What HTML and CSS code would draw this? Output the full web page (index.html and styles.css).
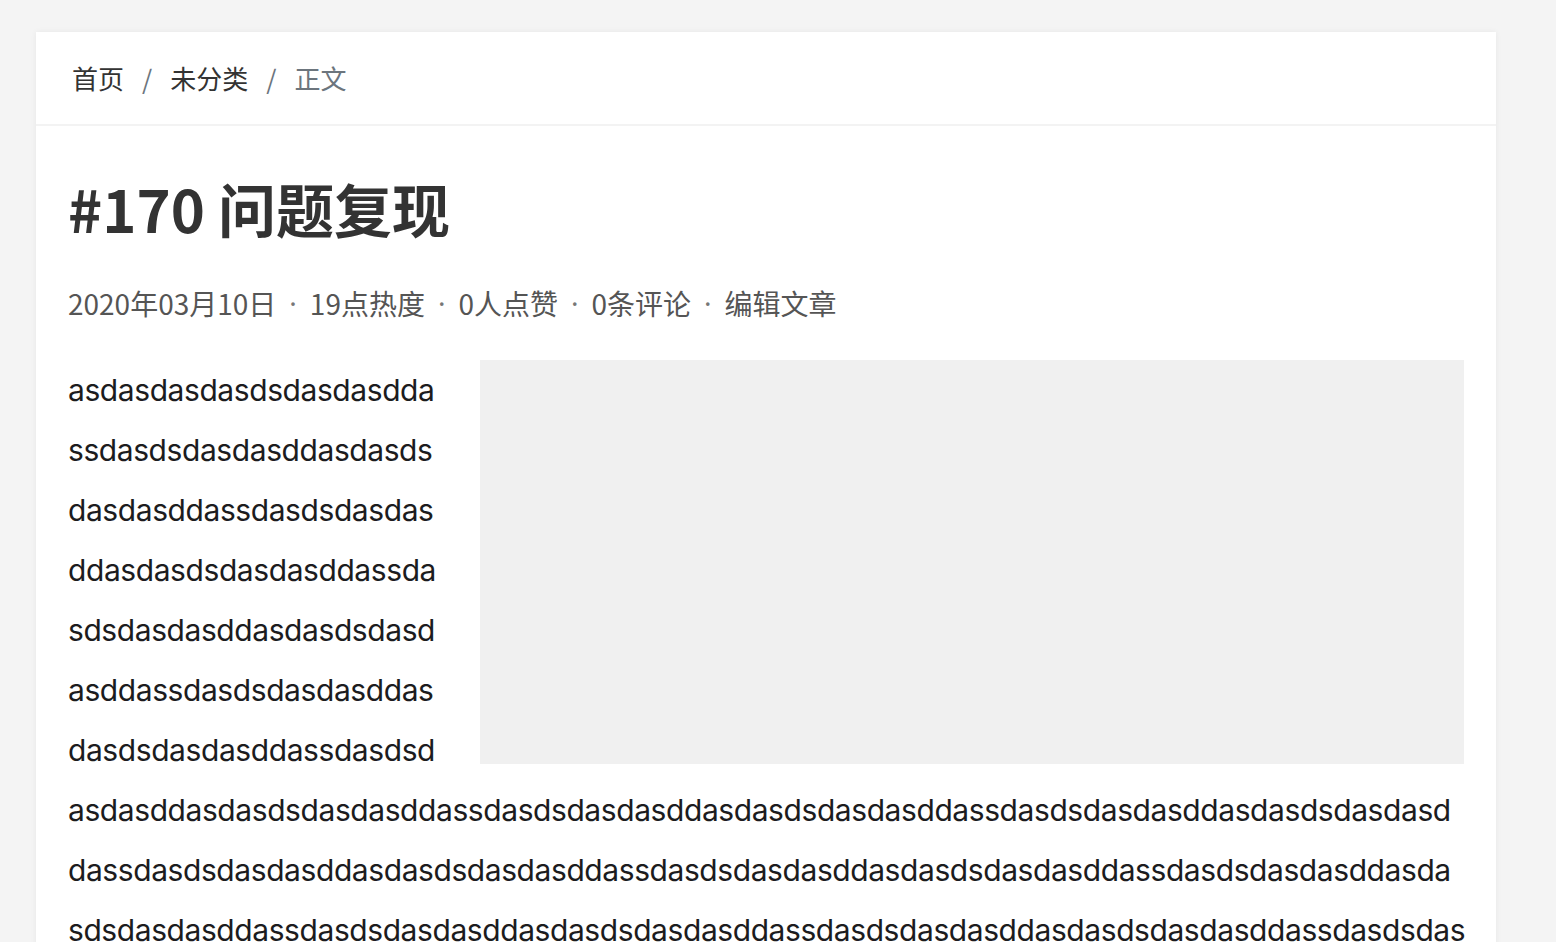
FILE: index.html
```html
<!DOCTYPE html>
<html lang="zh-CN">
<head>
<meta charset="utf-8">
<title>#170 问题复现</title>
<link rel="stylesheet" href="styles.css">
</head>
<body>
<div class="card">
  <nav class="crumbs">
    <a class="crumb" href="#">首页</a>
    <span class="slash">/</span>
    <a class="crumb" href="#">未分类</a>
    <span class="slash">/</span>
    <span class="crumb current">正文</span>
  </nav>
  <article class="post">
    <h1 class="title">#170 问题复现</h1>
    <div class="meta">
      <span>2020年03月10日</span><span class="dot">·</span>
      <span>19点热度</span><span class="dot">·</span>
      <span>0人点赞</span><span class="dot">·</span>
      <span>0条评论</span><span class="dot">·</span>
      <a class="edit" href="#">编辑文章</a>
    </div>
    <div class="body">
      <div class="figure"></div>
      <p class="text">asdasdasdasdsdasdasdda<br>ssdasdsdasdasddasdasds<br>dasdasddassdasdsdasdas<br>ddasdasdsdasdasddassda<br>sdsdasdasddasdasdsdasd<br>asddassdasdsdasdasddas<br>dasdsdasdasddassdasdsd<br>asdasddasdasdsdasdasddassdasdsdasdasddasdasdsdasdasddassdasdsdasdasddasdasdsdasdasd<br>dassdasdsdasdasddasdasdsdasdasddassdasdsdasdasddasdasdsdasdasddassdasdsdasdasddasda<br>sdsdasdasddassdasdsdasdasddasdasdsdasdasddassdasdsdasdasddasdasdsdasdasddassdasdsdas</p>
    </div>
  </article>
</div>
</body>
</html>
```

FILE: styles.css
```css
html, body {
  margin: 0;
  padding: 0;
  background: #f4f4f4;
}
body {
  padding: 32px 0 0 36px;
  font-family: "Noto Sans CJK SC", "Noto Sans", sans-serif;
  color: #333;
}
.card {
  width: 1460px;
  min-height: 1000px;
  background: #fff;
  box-shadow: 0 0 6px rgba(0, 0, 0, 0.06);
}
.crumbs {
  height: 94px;
  padding: 0 36px 2px;
  box-sizing: border-box;
  display: flex;
  align-items: center;
  border-bottom: 2px solid #f3f3f3;
  font-size: 26px;
}
.crumb {
  color: #333;
  text-decoration: none;
}
.crumb.current {
  color: #6c757d;
}
.slash {
  color: #6c757d;
  padding: 0 18px;
}
.post {
  padding: 0 32px;
}
.title {
  margin: 42px 0 0;
  font-family: "Noto Sans CJK SC", sans-serif;
  font-size: 58px;
  font-weight: 700;
  line-height: 80px;
  color: #333;
}
.meta {
  margin-top: 35px;
  font-size: 28px;
  line-height: 40px;
  color: #555;
  display: flex;
  align-items: center;
}
.dot {
  font-family: "Noto Sans", sans-serif;
  margin: 0 13px;
  color: #777;
}
.edit {
  color: #555;
  text-decoration: none;
}
.body {
  margin-top: 37px;
}
.figure {
  float: right;
  width: 984px;
  height: 404px;
  margin-left: 32px;
  background: #f0f0f0;
}
.text {
  margin: 0;
  font-family: Inter, "Noto Sans", sans-serif;
  font-size: 30px;
  letter-spacing: -0.42px;
  line-height: 60px;
  color: #1c1c1e;
  white-space: nowrap;
}
```
